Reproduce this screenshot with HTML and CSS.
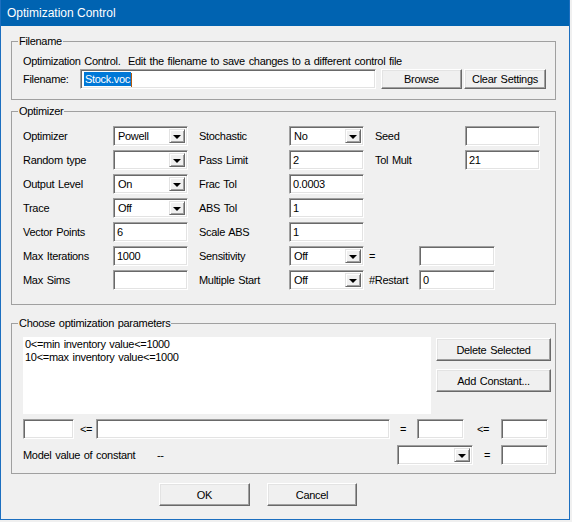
FILE: index.html
```html
<!DOCTYPE html>
<html lang="en">
<head>
  <meta charset="UTF-8">
  <title>Optimization Control</title>
  <link rel="stylesheet" href="styles.css">
</head>
<body>

<div class="window">
  <div class="titlebar">Optimization Control</div>

  <div class="client">
    <!-- Filename -->
    <fieldset class="group group-file">
      <legend>Filename</legend>
      <div class="hint">Optimization Control.&nbsp; Edit the filename to save changes to a different control file</div>
      <div class="file-row">
        <span class="file-label">Filename:</span>
        <div class="edit file-edit"><span class="sel">Stock.voc</span><span class="caret"></span></div>
        <button class="btn btn-browse">Browse</button>
        <button class="btn btn-clear">Clear Settings</button>
      </div>
    </fieldset>

    <!-- Optimizer -->
    <fieldset class="group group-opt">
      <legend>Optimizer</legend>
      <div class="opt-row">
        <span class="lbl">Optimizer</span>
        <div class="combo ctl"><span>Powell</span><i class="drop"></i></div>
        <span class="lbl gap">Stochastic</span>
        <div class="combo ctl"><span>No</span><i class="drop"></i></div>
        <span class="lbl gap">Seed</span>
        <div class="edit ctl"></div>
      </div>
      <div class="opt-row">
        <span class="lbl">Random type</span>
        <div class="combo ctl"><span></span><i class="drop"></i></div>
        <span class="lbl gap">Pass Limit</span>
        <div class="edit ctl">2</div>
        <span class="lbl gap">Tol Mult</span>
        <div class="edit ctl">21</div>
      </div>
      <div class="opt-row">
        <span class="lbl">Output Level</span>
        <div class="combo ctl"><span>On</span><i class="drop"></i></div>
        <span class="lbl gap">Frac Tol</span>
        <div class="edit ctl">0.0003</div>
      </div>
      <div class="opt-row">
        <span class="lbl">Trace</span>
        <div class="combo ctl"><span>Off</span><i class="drop"></i></div>
        <span class="lbl gap">ABS Tol</span>
        <div class="edit ctl">1</div>
      </div>
      <div class="opt-row">
        <span class="lbl">Vector Points</span>
        <div class="edit ctl">6</div>
        <span class="lbl gap">Scale ABS</span>
        <div class="edit ctl">1</div>
      </div>
      <div class="opt-row">
        <span class="lbl">Max Iterations</span>
        <div class="edit ctl">1000</div>
        <span class="lbl gap">Sensitivity</span>
        <div class="combo ctl"><span>Off</span><i class="drop"></i></div>
        <span class="lbl-sm">=</span>
        <div class="edit ctl-wide"></div>
      </div>
      <div class="opt-row">
        <span class="lbl">Max Sims</span>
        <div class="edit ctl"></div>
        <span class="lbl gap">Multiple Start</span>
        <div class="combo ctl"><span>Off</span><i class="drop"></i></div>
        <span class="lbl-sm">#Restart</span>
        <div class="edit ctl-wide">0</div>
      </div>
    </fieldset>

    <!-- Parameters -->
    <fieldset class="group group-params">
      <legend>Choose optimization parameters</legend>
      <div class="param-top">
        <div class="listbox">
          <div>0&lt;=min inventory value&lt;=1000</div>
          <div>10&lt;=max inventory value&lt;=1000</div>
        </div>
        <div class="param-btns">
          <button class="btn btn-side">Delete Selected</button>
          <button class="btn btn-side">Add Constant...</button>
        </div>
      </div>
      <div class="bound-row">
        <div class="edit w-low"></div>
        <span class="op op-le">&lt;=</span>
        <div class="edit w-expr"></div>
        <span class="op op-eq">=</span>
        <div class="edit w-val"></div>
        <span class="op op-le2">&lt;=</span>
        <div class="edit w-val"></div>
      </div>
      <div class="model-row">
        <span class="model-label">Model value of constant</span>
        <span class="model-value">--</span>
        <div class="combo w-combo"><span></span><i class="drop"></i></div>
        <span class="op op-eq2">=</span>
        <div class="edit w-val"></div>
      </div>
    </fieldset>

    <div class="dialog-btns">
      <button class="btn btn-dlg">OK</button>
      <button class="btn btn-dlg btn-cancel">Cancel</button>
    </div>
  </div>
</div>

</body>
</html>
```

FILE: styles.css
```css
* {
  box-sizing: border-box;
}
body {
  margin: 0;
  background-color: #f0f0f0;
  font-family: "Liberation Sans", Arial, sans-serif;
  font-size: 11px;
  letter-spacing: -0.3px;
  word-spacing: 1px;
  color: #000;
}
.window {
  width: 570px;
  height: 520px;
  border: 1px solid #1c6fc0;
  border-top: none;
  background-color: #f0f0f0;
}
.titlebar {
  height: 26px;
  line-height: 26px;
  padding-left: 6px;
  background-color: #0063b1;
  color: #fff;
  font-size: 12px;
  letter-spacing: 0;
  word-spacing: 0;
}
.client {
  padding: 0 0 0 10px;
}

/* GROUP BOXES */
.group {
  width: 545px;
  margin: 0;
  padding: 0 0 0 11px;
  border: 1px solid #a0a0a0;
  min-inline-size: 0;
}
.group legend {
  margin-left: -5px;
  padding: 0 1px;
  line-height: 13px;
}
.group-file {
  margin-top: 9px;
  padding-bottom: 10px;
}
.group-opt {
  margin-top: 5px;
  padding-bottom: 14px;
}
.group-params {
  margin-top: 12px;
  padding-bottom: 8px;
}

/* FILENAME */
.hint {
  margin-top: 7px;
  line-height: 13px;
}
.file-row {
  display: flex;
  align-items: center;
  margin-top: 1px;
  height: 20px;
}
.file-label {
  width: 57px;
}
.file-edit {
  width: 296px;
  padding-left: 2px;
}
.sel {
  background-color: #0078d7;
  color: #fff;
  padding: 1px 1px;
}
.caret {
  display: inline-block;
  width: 1px;
  height: 14px;
  background-color: #b05a10;
  vertical-align: middle;
}
.btn-browse {
  margin-left: 5px;
  width: 81px;
}
.btn-clear {
  margin-left: 2px;
  width: 82px;
}

/* CONTROLS */
.edit,
.combo {
  height: 20px;
  background-color: #fff;
  border: 1px solid;
  border-color: #a0a0a0 #fff #fff #a0a0a0;
  box-shadow: inset 1px 1px 0 #696969, inset -1px -1px 0 #e3e3e3;
  padding-left: 3px;
  line-height: 18px;
  white-space: nowrap;
  overflow: hidden;
  flex: none;
}
.combo {
  display: flex;
  justify-content: space-between;
  padding: 2px 2px 2px 4px;
  line-height: 14px;
}
.drop {
  width: 16px;
  height: 14px;
  background-color: #f0f0f0;
  border: 1px solid;
  border-color: #e3e3e3 #696969 #696969 #e3e3e3;
  box-shadow: inset 1px 1px 0 #fff, inset -1px -1px 0 #a0a0a0;
  display: flex;
  align-items: center;
  justify-content: center;
  flex: none;
}
.drop::after {
  content: "";
  border-left: 4px solid transparent;
  border-right: 4px solid transparent;
  border-top: 4px solid #000;
  margin-top: 1px;
}
.btn {
  height: 20px;
  padding: 0;
  font: inherit;
  letter-spacing: inherit;
  word-spacing: inherit;
  color: #000;
  background-color: #f0f0f0;
  border: 1px solid;
  border-color: #fff #696969 #696969 #fff;
  box-shadow: inset -1px -1px 0 #a0a0a0, inset 1px 1px 0 #e3e3e3;
  flex: none;
}

/* OPTIMIZER GRID */
.opt-row {
  display: flex;
  align-items: center;
  height: 20px;
  margin-top: 4px;
}
.opt-row:first-of-type {
  margin-top: 8px;
}
.lbl {
  width: 90px;
  flex: none;
}
.lbl.gap {
  margin-left: 11px;
}
.ctl {
  width: 75px;
}
.lbl-sm {
  width: 50px;
  margin-left: 5px;
  flex: none;
}
.ctl-wide {
  width: 76px;
}

/* PARAMETERS */
.param-top {
  display: flex;
  align-items: flex-start;
  margin-top: 7px;
}
.listbox {
  width: 408px;
  height: 77px;
  background-color: #fff;
  padding: 1px 2px;
  line-height: 13px;
}
.param-btns {
  margin-left: 5px;
  padding-top: 1px;
  display: flex;
  flex-direction: column;
  gap: 8px;
}
.btn-side {
  width: 115px;
  height: 23px;
}
.bound-row,
.model-row {
  display: flex;
  align-items: center;
  height: 20px;
}
.bound-row {
  margin-top: 5px;
}
.model-row {
  margin-top: 6px;
}
.op {
  flex: none;
}
.w-low {
  width: 51px;
}
.op-le {
  width: 22px;
  padding-left: 6px;
}
.w-expr {
  width: 294px;
}
.op-eq {
  width: 27px;
  padding-left: 10px;
}
.w-val {
  width: 47px;
}
.op-le2 {
  width: 37px;
  padding-left: 13px;
}
.model-label {
  width: 134px;
  flex: none;
}
.model-value {
  width: 240px;
  flex: none;
}
.w-combo {
  width: 76px;
}
.op-eq2 {
  width: 28px;
  padding-left: 11px;
}

/* OK / CANCEL */
.dialog-btns {
  display: flex;
  margin-top: 9px;
  padding-left: 148px;
}
.btn-dlg {
  width: 91px;
  height: 23px;
}
.btn-cancel {
  width: 90px;
  margin-left: 17px;
}
```
